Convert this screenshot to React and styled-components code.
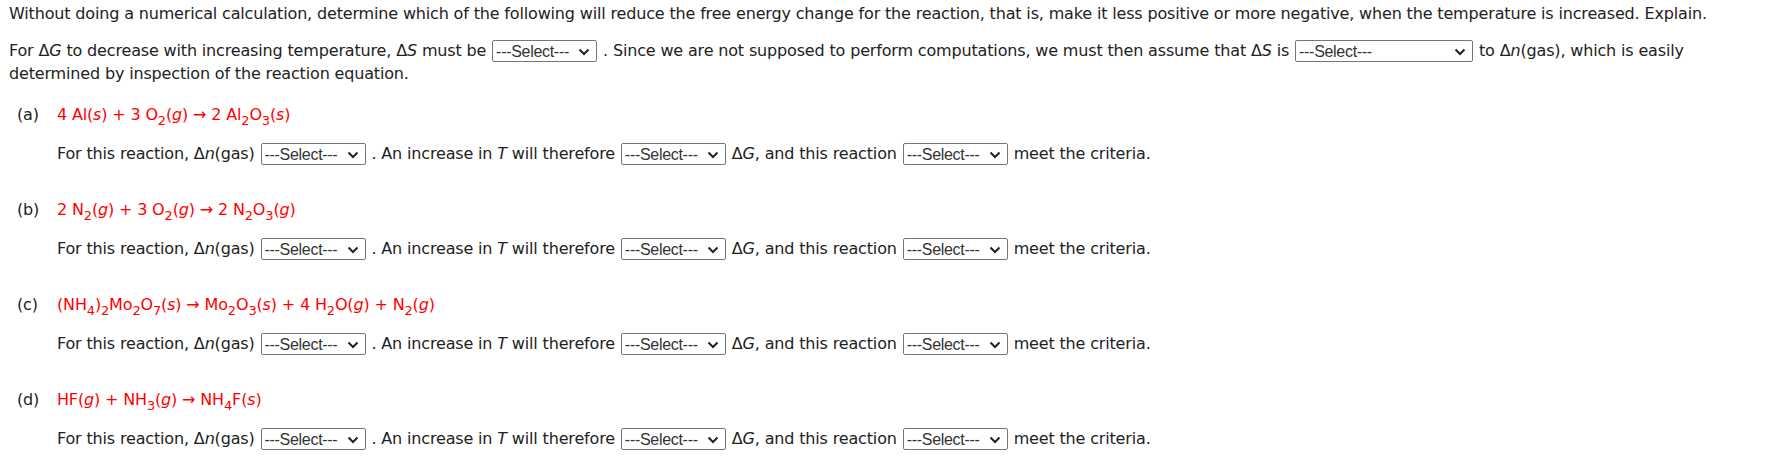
import styled, { createGlobalStyle } from 'styled-components';

const GlobalStyle = createGlobalStyle`
    body {
        margin: 0;
        background: #fff;
        font-family: "DejaVu Sans", sans-serif;
        font-size: 16px;
        letter-spacing: -0.16px;
        color: #222;
    }
`;

const Page = styled.div`
    padding: 2px 0 0 9px;
    line-height: 23px;
`;

const Intro = styled.p`
    margin: 0 0 14px;
`;

const Question = styled.p`
    margin: 0;
`;

const PartList = styled.div`
    margin-top: 18px;
    display: flex;
    flex-direction: column;
    gap: 33px;
`;

const Part = styled.div`
    display: grid;
    grid-template-columns: 40px 1fr;
    row-gap: 16px;
    padding-left: 8px;
`;

const Label = styled.span``;

const Reaction = styled.span`
    color: #ff0000;
`;

const Row = styled.div`
    grid-column: 2;
`;

const Sub = styled.sub`
    font-size: 13px;
    line-height: 0;
    vertical-align: -5px;
`;

const Var = styled.i``;

const SelectWrap = styled.span`
    position: relative;
    display: inline-block;
    vertical-align: middle;
    margin: -2px 1px 0;
    height: 22px;
    letter-spacing: 0;
`;

const Select = styled.select`
    appearance: none;
    width: ${p => (p.$wide ? '178px' : '105px')};
    height: 22px;
    box-sizing: border-box;
    border: 1px solid #767676;
    border-radius: 2px;
    background: #fff;
    color: #333;
    font: 16px "Liberation Sans", Arial, sans-serif;
    letter-spacing: -0.3px;
    padding: 0 0 0 3px;
    margin: 0;
`;

const Chevron = styled.svg`
    position: absolute;
    right: 7px;
    top: 8px;
    pointer-events: none;
`;

const Dropdown = ({ wide }) => (
    <SelectWrap>
        <Select $wide={wide} defaultValue="">
            <option value="">---Select---</option>
        </Select>
        <Chevron width="12" height="8" viewBox="0 0 12 8">
            <path d="M1.5 1.5 L6 6 L10.5 1.5" fill="none" stroke="#222" strokeWidth="2" />
        </Chevron>
    </SelectWrap>
);

const Delta = ({ children }) => <>Δ<Var>{children}</Var></>;

const reactions = [
    {
        label: '(a)',
        eq: <>4 Al(<Var>s</Var>) + 3 O<Sub>2</Sub>(<Var>g</Var>) → 2 Al<Sub>2</Sub>O<Sub>3</Sub>(<Var>s</Var>)</>,
    },
    {
        label: '(b)',
        eq: <>2 N<Sub>2</Sub>(<Var>g</Var>) + 3 O<Sub>2</Sub>(<Var>g</Var>) → 2 N<Sub>2</Sub>O<Sub>3</Sub>(<Var>g</Var>)</>,
    },
    {
        label: '(c)',
        eq: <>(NH<Sub>4</Sub>)<Sub>2</Sub>Mo<Sub>2</Sub>O<Sub>7</Sub>(<Var>s</Var>) → Mo<Sub>2</Sub>O<Sub>3</Sub>(<Var>s</Var>) + 4 H<Sub>2</Sub>O(<Var>g</Var>) + N<Sub>2</Sub>(<Var>g</Var>)</>,
    },
    {
        label: '(d)',
        eq: <>HF(<Var>g</Var>) + NH<Sub>3</Sub>(<Var>g</Var>) → NH<Sub>4</Sub>F(<Var>s</Var>)</>,
    },
];

export default function App() {
    return (
        <Page>
            <GlobalStyle />
            <Intro>
                Without doing a numerical calculation, determine which of the following will reduce the free energy change for the reaction, that is, make it less positive or more negative, when the temperature is increased. Explain.
            </Intro>
            <Question>
                For <Delta>G</Delta> to decrease with increasing temperature, <Delta>S</Delta> must be <Dropdown /> . Since we are not supposed to perform computations, we must then assume that <Delta>S</Delta> is <Dropdown wide /> to <Delta>n</Delta>(gas), which is easily<br />
                determined by inspection of the reaction equation.
            </Question>
            <PartList>
                {reactions.map(r => (
                    <Part key={r.label}>
                        <Label>{r.label}</Label>
                        <Reaction>{r.eq}</Reaction>
                        <Row>
                            For this reaction, <Delta>n</Delta>(gas) <Dropdown /> . An increase in <Var>T</Var> will therefore <Dropdown /> <Delta>G</Delta>, and this reaction <Dropdown /> meet the criteria.
                        </Row>
                    </Part>
                ))}
            </PartList>
        </Page>
    );
}
